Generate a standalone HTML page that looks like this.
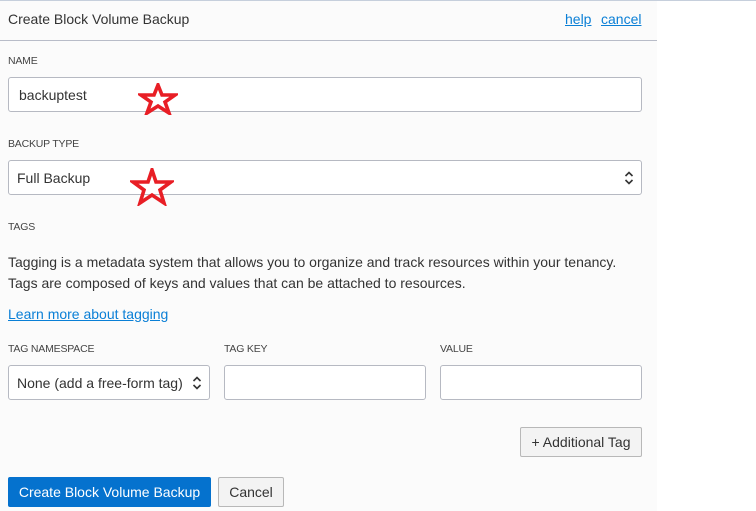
<!DOCTYPE html>
<html><head><style>
*{margin:0;padding:0;box-sizing:border-box}
body{width:756px;height:511px;background:#fff;font-family:"Liberation Sans",sans-serif;position:relative;overflow:hidden;color:#333}
.panel{position:absolute;left:0;top:0;width:657px;height:511px;background:#fbfbfb}
.topline{position:absolute;left:0;top:0;width:756px;height:1px;background:#c6cfdc}
.hline{position:absolute;left:0;top:40px;width:657px;height:1px;background:#b8bcc8}
.a{position:absolute;white-space:nowrap}
.lbl{font-size:10.5px;color:#444;letter-spacing:-0.2px}
.box{position:absolute;background:#fff;border:1px solid #b6b9c2;border-radius:3px;font-size:14px;color:#333;padding-left:8px;display:flex;align-items:center}
.lnk{color:#0a7fd6;text-decoration:underline;font-size:14px}
.caret{position:absolute;right:7px;top:50%;transform:translateY(-50%)}
.btn{position:absolute;border-radius:2px;font-size:14px;display:flex;align-items:center;justify-content:center}
</style></head><body>
<div class="panel"></div>
<div class="topline"></div>
<div class="hline"></div>
<div class="a" style="left:8px;top:11px;font-size:14px;color:#333">Create Block Volume Backup</div>
<div class="a lnk" style="left:565px;top:11px">help</div>
<div class="a lnk" style="left:601px;top:11px">cancel</div>

<div class="a lbl" style="left:8px;top:55px">NAME</div>
<div class="box" style="left:8px;top:77px;width:634px;height:35px;padding-left:10px">backuptest</div>

<div class="a lbl" style="left:8px;top:138px">BACKUP TYPE</div>
<div class="box" style="left:8px;top:160px;width:634px;height:35px">Full Backup
<svg class="caret" width="10" height="16" viewBox="0 0 10 16"><path d="M1.5 6 L5 2.5 L8.5 6 M1.5 10 L5 13.5 L8.5 10" fill="none" stroke="#333" stroke-width="1.6"/></svg></div>

<div class="a lbl" style="left:8px;top:221px">TAGS</div>
<div class="a" style="left:8px;top:252px;font-size:14px;line-height:21px;color:#333">Tagging is a metadata system that allows you to organize and track resources within your tenancy.<br>Tags are composed of keys and values that can be attached to resources.</div>
<div class="a lnk" style="left:8px;top:306px">Learn more about tagging</div>

<div class="a lbl" style="left:8px;top:343px">TAG NAMESPACE</div>
<div class="a lbl" style="left:224px;top:343px">TAG KEY</div>
<div class="a lbl" style="left:440px;top:343px">VALUE</div>
<div class="box" style="left:8px;top:365px;width:202px;height:35px">None (add a free-form tag)
<svg class="caret" width="10" height="16" viewBox="0 0 10 16"><path d="M1.5 6 L5 2.5 L8.5 6 M1.5 10 L5 13.5 L8.5 10" fill="none" stroke="#333" stroke-width="1.6"/></svg></div>
<div class="box" style="left:224px;top:365px;width:202px;height:35px"></div>
<div class="box" style="left:440px;top:365px;width:202px;height:35px"></div>

<div class="btn" style="left:520px;top:427px;width:122px;height:30px;background:#f3f3f3;border:1px solid #b8b8b8;color:#333">+ Additional Tag</div>
<div class="btn" style="left:8px;top:477px;width:203px;height:30px;background:#0572ce;color:#fff">Create Block Volume Backup</div>
<div class="btn" style="left:218px;top:477px;width:66px;height:30px;background:#f3f3f3;border:1px solid #b8b8b8;color:#333">Cancel</div>

<svg class="a" style="left:138px;top:83px" width="40" height="32" viewBox="0 0 40 32"><path d="M20 2 L24 12 L37 12 L27 19 L31 30 L20 23 L9 30 L13 19 L3 12 L16 12 Z" fill="none" stroke="#e81e25" stroke-width="3.6" stroke-linejoin="miter"/></svg>
<svg class="a" style="left:130px;top:168px" width="44" height="38" viewBox="0 0 44 38"><path d="M22 2 L26 14 L41 14 L30 22 L34 35 L22 27 L10 35 L14 22 L3 14 L18 14 Z" fill="none" stroke="#e81e25" stroke-width="3.6"/></svg>
</body></html>
